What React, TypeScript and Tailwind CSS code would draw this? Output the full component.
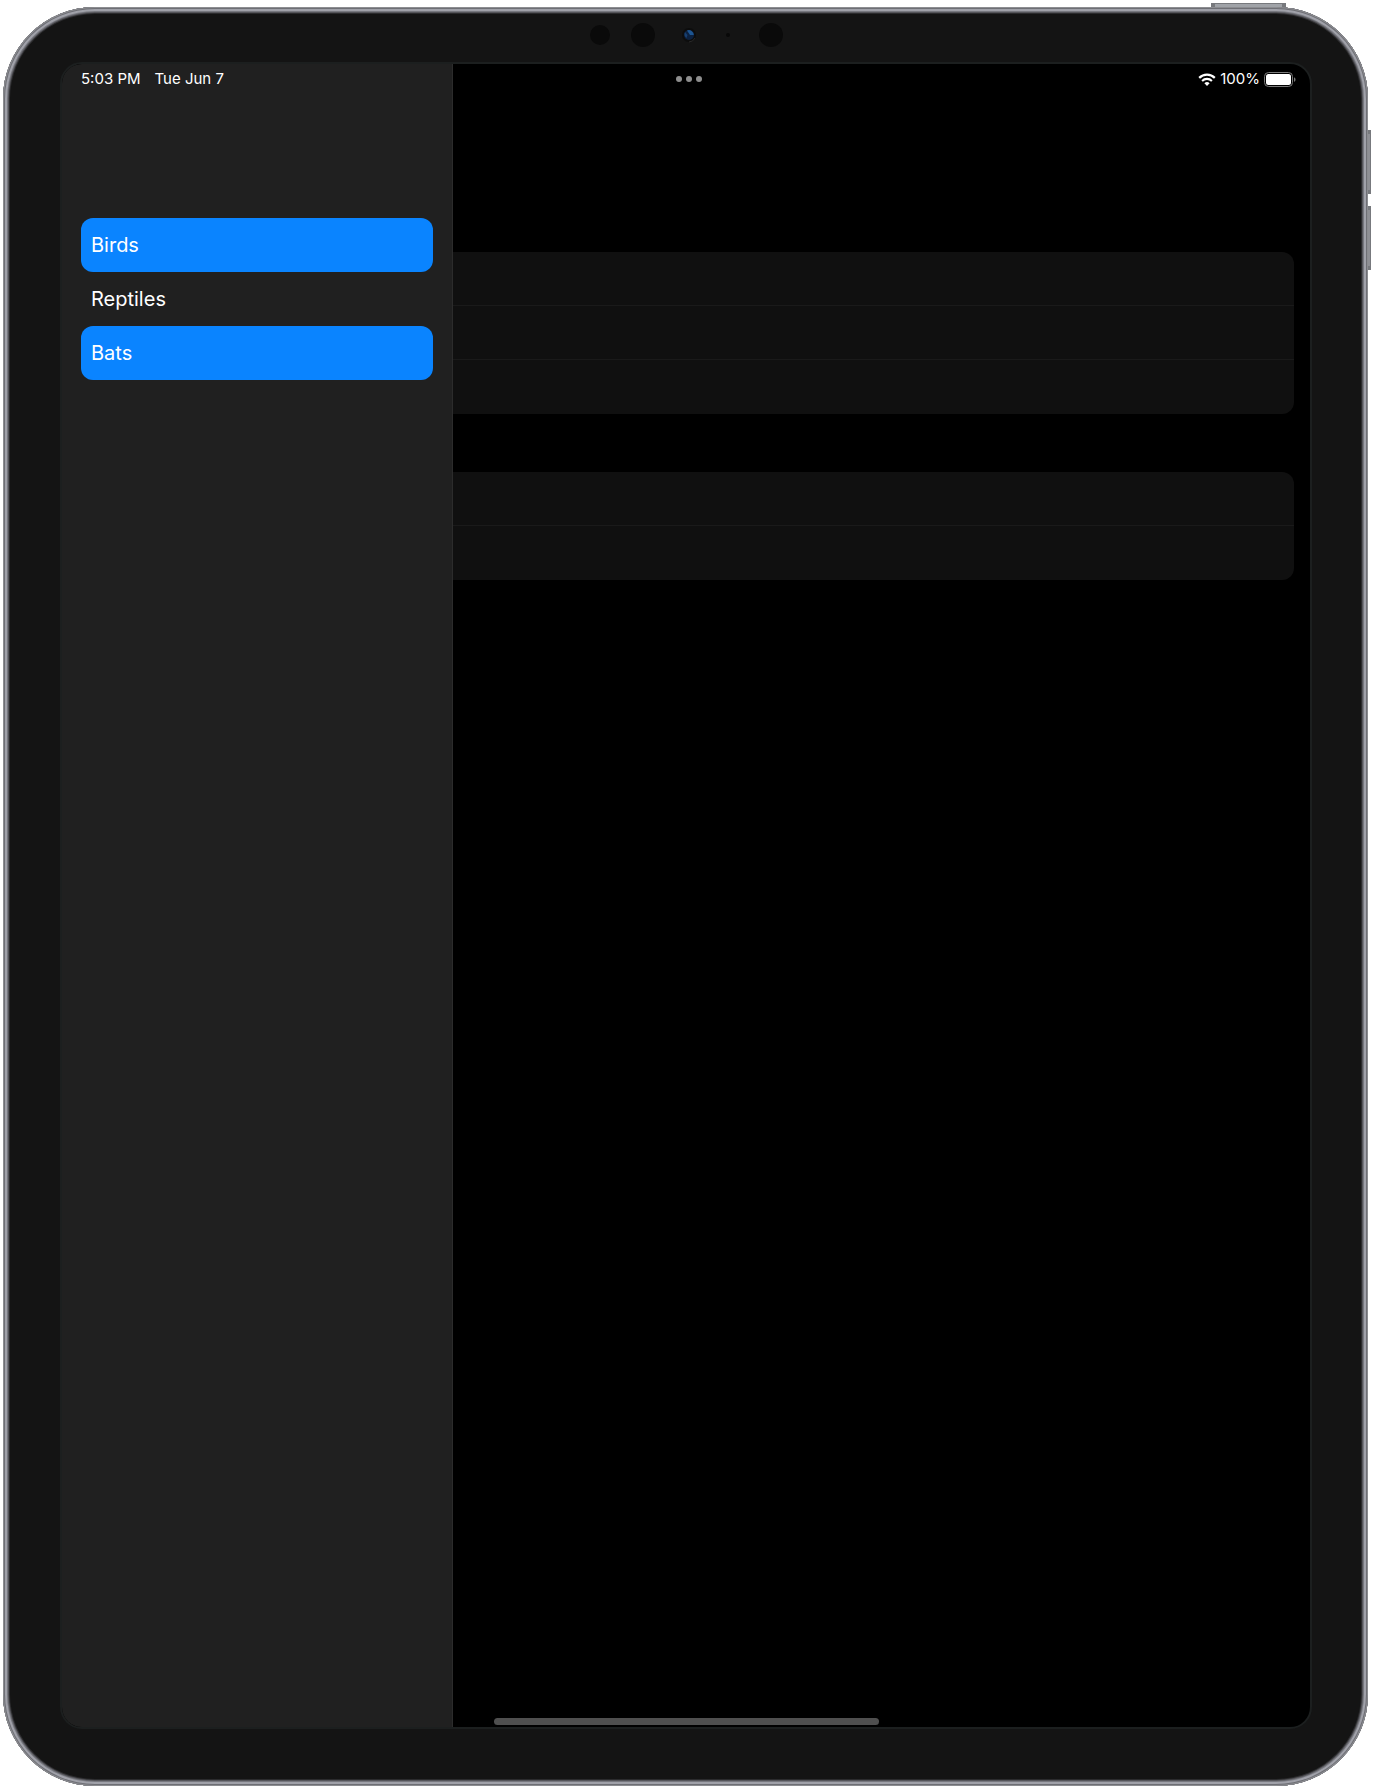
import { useState } from "react";

const animals = ["Birds", "Reptiles", "Bats"];
const groups = [3, 2];

// Front camera and sensors in the top bezel
function Sensors() {
  return (
    <svg width="200" height="28" viewBox="-2 0 200 28" aria-hidden="true">
      <circle cx="12" cy="14" r="10" fill="#0a0a0a" />
      <circle cx="55" cy="14" r="12" fill="#0a0a0a" />
      <circle cx="101" cy="14" r="7" fill="#0d0d0d" />
      <path d="M107 17a7 7 0 0 1-6 4" fill="none" stroke="#2a2a2a" strokeWidth="1" />
      <circle cx="101" cy="14" r="5" fill="#0c2140" />
      <path d="M102 14L99 9.4a5 5 0 0 1 6.8 4.6z" fill="#1d5591" />
      <path d="M97 11l2.5 3-1 3a5 5 0 0 1-1.5-6z" fill="#173f70" />
      <circle cx="140" cy="14" r="2" fill="#080808" />
      <circle cx="183" cy="14" r="12" fill="#0a0a0a" />
    </svg>
  );
}

function WifiIcon() {
  return (
    <svg width="18" height="13" viewBox="0 0 18 13" fill="none" aria-hidden="true">
      <path d="M1.2 4.9a11 11 0 0 1 15.6 0" stroke="white" strokeWidth="2.2" />
      <path d="M4.1 7.9a7 7 0 0 1 9.8 0" stroke="white" strokeWidth="2.1" />
      <path d="M9 12.9L6.4 10.3a3.7 3.7 0 0 1 5.2 0z" fill="white" />
    </svg>
  );
}

function BatteryIcon() {
  return (
    <svg width="32" height="15" viewBox="0 0 32 15" fill="none" aria-hidden="true">
      <rect x="0.5" y="0.5" width="28" height="14" rx="4" stroke="#7a7a7a" />
      <rect x="2" y="2" width="25" height="11" rx="2.5" fill="white" />
      <path d="M30 5.2c2 .8 2 3.8 0 4.6z" fill="#7a7a7a" />
    </svg>
  );
}

function StatusBar() {
  return (
    <header className="absolute inset-x-0 top-0 grid grid-cols-3 items-center pt-1 pr-3.5 pl-[19px] text-[15px] leading-[22px]">
      <div className="flex gap-3.5">
        <span>5:03 PM</span>
        <span>Tue Jun 7</span>
      </div>
      <button type="button" aria-label="Multitasking" className="flex justify-center gap-1">
        <span className="size-1.5 rounded-full bg-[#8e8e8e]" />
        <span className="size-1.5 rounded-full bg-[#8e8e8e]" />
        <span className="size-1.5 rounded-full bg-[#8e8e8e]" />
      </button>
      <div className="flex items-center justify-end gap-1">
        <WifiIcon />
        <span>100%</span>
        <BatteryIcon />
      </div>
    </header>
  );
}

export default function App() {
  const [selected, setSelected] = useState<string[]>(["Birds", "Bats"]);

  const toggle = (name: string) => {
    if (selected.includes(name)) {
      setSelected(selected.filter((s) => s !== name));
    } else {
      setSelected([...selected, name]);
    }
  };

  return (
    <div className="flex min-h-screen bg-white pt-[7px] pr-1.5 pb-1 pl-[3px] font-[Inter,sans-serif] text-white">
      <div className="relative flex flex-1 flex-col rounded-[92px] bg-[#141414] pr-14 pb-[57px] pl-[57px] shadow-[inset_0_0_0_1px_#8c8d91,inset_0_0_0_2px_#6e6f75,inset_0_0_0_4px_#a0a1a9,inset_0_0_0_5px_#77787f,inset_0_0_0_6px_#55555a,inset_0_0_0_7px_#2b2b2d]">
        {/* hardware buttons */}
        <div className="absolute -top-1 right-[82px] h-1 w-[75px] border-x-4 border-t border-[#77797d] bg-[#a0a3a8]" />
        <div className="absolute top-[123px] -right-[3px] h-16 w-[3px] border-y-4 border-r border-[#77797d] bg-[#8f9095]" />
        <div className="absolute top-[199px] -right-[3px] h-16 w-[3px] border-y-4 border-r border-[#77797d] bg-[#8f9095]" />

        <div className="flex h-[55px] items-center justify-center">
          <Sensors />
        </div>

        <div className="relative flex flex-1 overflow-hidden rounded-[22px] border-2 border-[#1c1f1f] bg-black">
          <nav className="w-[391px] shrink-0 border-r border-[#2c2c2c] bg-[#202020] px-[19px] pt-[154px]">
            <ul>
              {animals.map((name) => (
                <li key={name}>
                  <button
                    type="button"
                    aria-pressed={selected.includes(name)}
                    onClick={() => toggle(name)}
                    className={`h-[54px] w-full rounded-xl px-2.5 text-left text-xl ${
                      selected.includes(name) ? "bg-[#0a84ff]" : ""
                    }`}
                  >
                    {name}
                  </button>
                </li>
              ))}
            </ul>
          </nav>

          <main className="flex flex-1 flex-col gap-[58px] pt-[188px] pr-4">
            {groups.map((rows, i) => (
              <ul key={i} className="divide-y divide-[#1a1a1a] rounded-r-xl bg-[#101010]">
                {Array.from({ length: rows }, (_, row) => (
                  <li key={row} className="h-[54px]" />
                ))}
              </ul>
            ))}
          </main>

          <StatusBar />
          <div className="absolute inset-x-0 bottom-0.5 flex justify-center">
            <div className="h-[7px] w-[385px] rounded-full bg-[#4f4f4f]" />
          </div>
        </div>
      </div>
    </div>
  );
}
